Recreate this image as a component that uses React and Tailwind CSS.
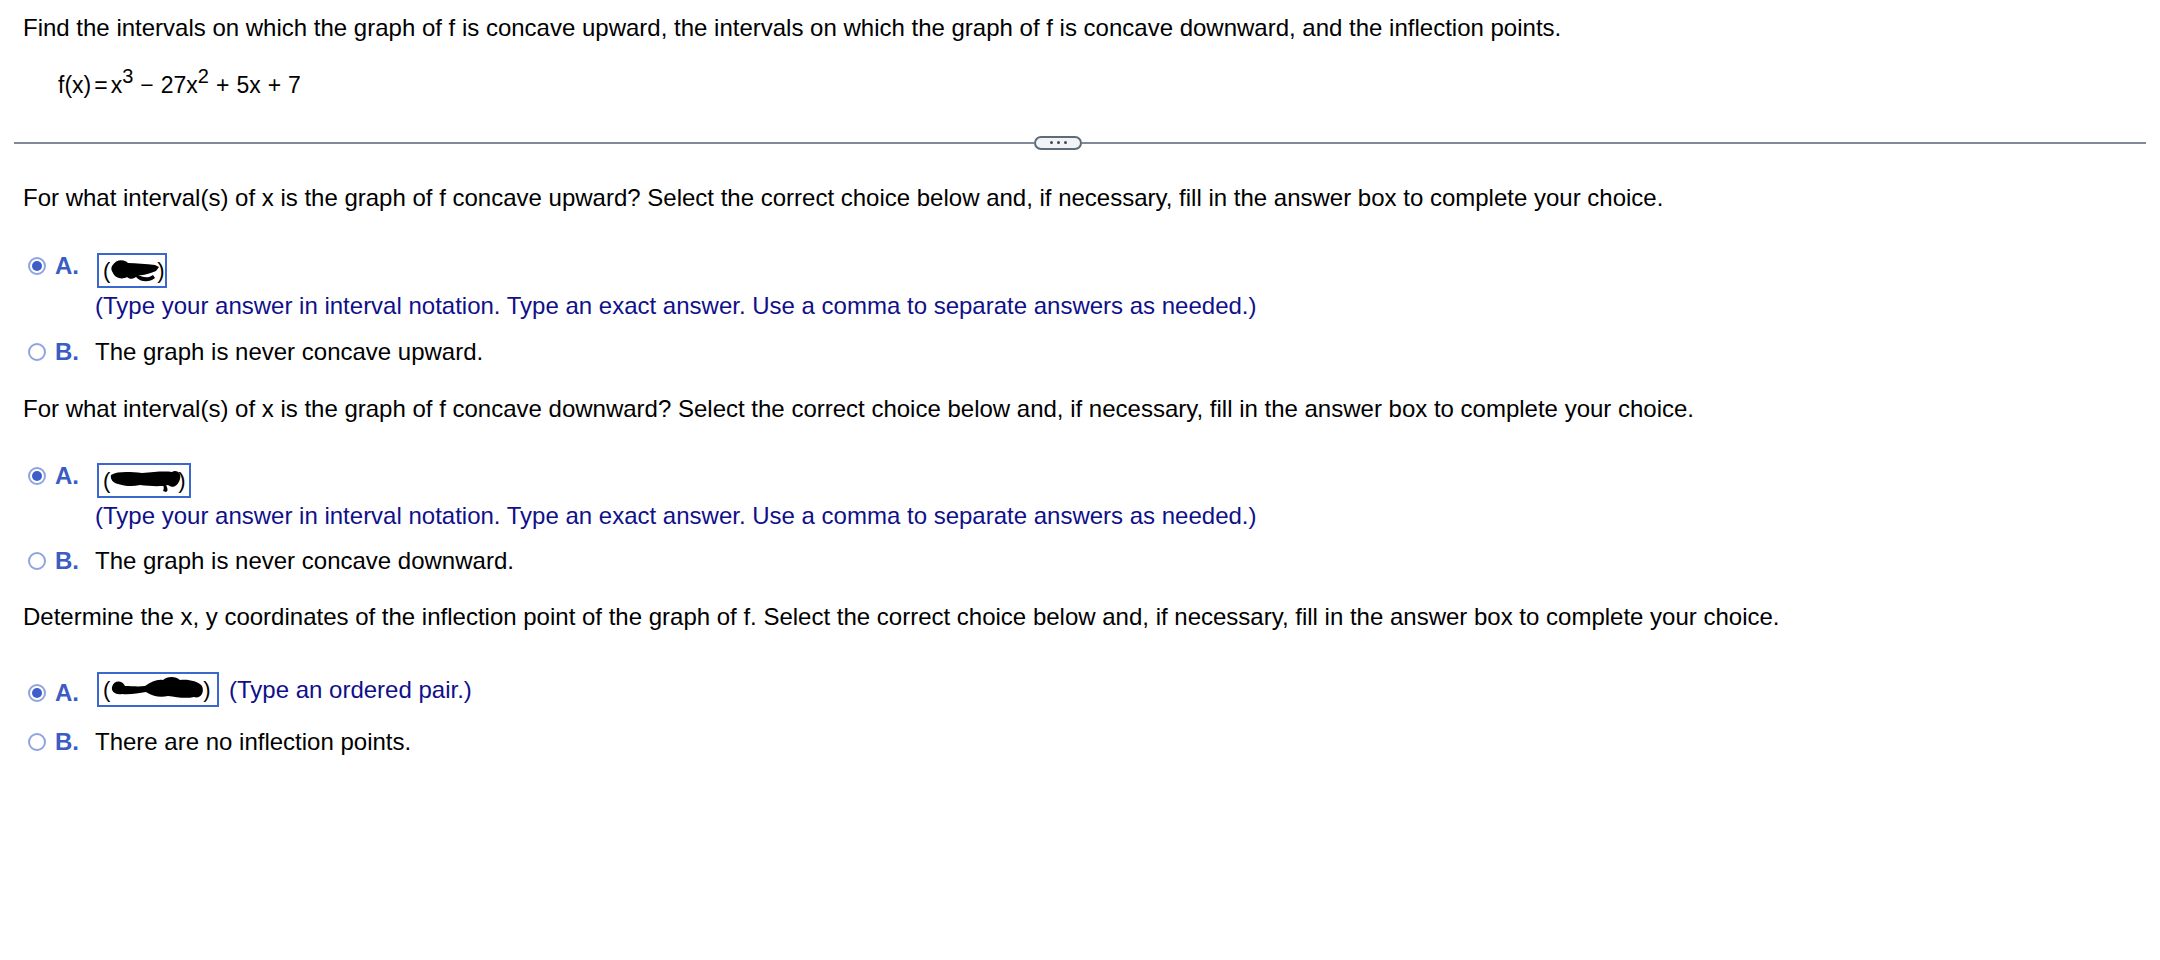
import React from "react";

const Radio = ({ checked }) => (
  <span className="flex h-[18px] w-[18px] shrink-0 items-center justify-center rounded-full border-[2px] border-[#8ea4e2] bg-white">
    {checked && <span className="h-[10px] w-[10px] rounded-full bg-[#3d5ec9]" />}
  </span>
);

const Blob = ({ w, d }) => (
  <svg width={w} height="28" viewBox={`0 0 ${w} 28`} className="shrink-0">
    <path d={d} fill="#000" />
  </svg>
);

const AnswerBox = ({ width, children }) => (
  <div
    className={`flex h-[35px] shrink-0 items-center border-[2px] border-[#3a68cc] px-[4px] ${width}`}
  >
    {children}
  </div>
);

const Question = ({ children, className }) => (
  <div className={`h-[28px] pl-[23px] leading-[28px] ${className}`}>{children}</div>
);

const Hint = ({ children, className }) => (
  <div className={`h-[28px] pl-[95px] leading-[28px] text-[#10108a] ${className}`}>
    {children}
  </div>
);

const OptionB = ({ children, className }) => (
  <div className={`flex h-[28px] items-center pl-[28px] leading-[28px] ${className}`}>
    <Radio />
    <span className="ml-[9px] w-[40px] shrink-0 font-bold text-[#3b5cc4]">B.</span>
    <span>{children}</span>
  </div>
);

export default function App() {
  return (
    <div className="h-[960px] w-[2160px] overflow-hidden bg-white font-['Liberation_Sans',Arial,sans-serif] text-[24px] text-black">
      <div className="mt-[14px] h-[28px] pl-[23px] leading-[28px]">
        Find the intervals on which the graph of f is concave upward, the intervals on which the graph of f is concave downward, and the inflection points.
      </div>

      <div className="mt-[29px] flex h-[28px] items-end pl-[58px] text-[23px] leading-[28px]">
        <span>f(x)</span>
        <span className="px-[3px]">=</span>
        <span>x</span>
        <span className="mb-[13px] text-[20px] leading-none">3</span>
        <span className="px-[7px]">−</span>
        <span>27x</span>
        <span className="mb-[13px] text-[20px] leading-none">2</span>
        <span className="px-[7px]">+</span>
        <span>5x</span>
        <span className="px-[7px]">+</span>
        <span>7</span>
      </div>

      <div className="mt-[37px] flex h-[13px] items-center">
        <div className="ml-[14px] h-[2px] w-[1020px] bg-[#7f8997]" />
        <button className="flex h-[14px] w-[48px] items-center justify-center gap-[4px] rounded-full border-[2px] border-[#5d6b7b] bg-[#f1f3f6]">
          <span className="h-[3px] w-[3px] rounded-full bg-[#3f4a58]" />
          <span className="h-[3px] w-[3px] rounded-full bg-[#3f4a58]" />
          <span className="h-[3px] w-[3px] rounded-full bg-[#3f4a58]" />
        </button>
        <div className="mr-[14px] h-[2px] flex-1 bg-[#7f8997]" />
      </div>

      <Question className="mt-[35px]">
        For what interval(s) of x is the graph of f concave upward? Select the correct choice below and, if necessary, fill in the answer box to complete your choice.
      </Question>

      <div className="mt-[41px] flex h-[35px] items-start pl-[28px]">
        <div className="flex h-[26px] items-center">
          <Radio checked />
          <span className="ml-[9px] w-[42px] shrink-0 font-bold text-[#3b5cc4]">A.</span>
        </div>
        <AnswerBox width="w-[70px]">
          <span className="text-[22px]">(</span>
          <Blob w={50} d="M2 9 C6 2 14 2 18 6 C26 6 36 7 45 8 L49 10 L46 14 C40 16 34 19 28 18 C25 22 20 23 17 20 C12 23 5 21 3 16 C1 13 1 11 2 9 Z M28 18 C32 20 38 22 43 18 L45 21 C39 26 30 25 26 20 Z" />
          <span className="-ml-[3px] text-[22px]">)</span>
        </AnswerBox>
      </div>

      <Hint className="mt-[4px]">
        (Type your answer in interval notation. Type an exact answer. Use a comma to separate answers as needed.)
      </Hint>

      <OptionB className="mt-[18px]">The graph is never concave upward.</OptionB>

      <Question className="mt-[29px]">
        For what interval(s) of x is the graph of f concave downward? Select the correct choice below and, if necessary, fill in the answer box to complete your choice.
      </Question>

      <div className="mt-[40px] flex h-[35px] items-start pl-[28px]">
        <div className="flex h-[26px] items-center">
          <Radio checked />
          <span className="ml-[9px] w-[42px] shrink-0 font-bold text-[#3b5cc4]">A.</span>
        </div>
        <AnswerBox width="w-[94px]">
          <span className="text-[22px]">(</span>
          <Blob w={72} d="M1 8 C8 4 20 5 32 6 C44 5 54 4 62 5 C66 2 72 6 70 12 C68 19 63 22 58 18 C50 20 40 19 30 18 C22 20 14 19 8 17 C3 16 0 12 1 8 Z M56 18 C58 22 58 24 56 25 L53 24 C54 22 54 20 53 18 Z" />
          <span className="-ml-[4px] text-[22px]">)</span>
        </AnswerBox>
      </div>

      <Hint className="mt-[4px]">
        (Type your answer in interval notation. Type an exact answer. Use a comma to separate answers as needed.)
      </Hint>

      <OptionB className="mt-[17px]">The graph is never concave downward.</OptionB>

      <Question className="mt-[28px]">
        Determine the x, y coordinates of the inflection point of the graph of f. Select the correct choice below and, if necessary, fill in the answer box to complete your choice.
      </Question>

      <div className="mt-[41px] flex h-[35px] items-center pl-[28px]">
        <div className="flex h-[35px] items-center pt-[7px]">
          <Radio checked />
          <span className="ml-[9px] w-[42px] shrink-0 font-bold text-[#3b5cc4]">A.</span>
        </div>
        <AnswerBox width="w-[122px]">
          <span className="text-[22px]">(</span>
          <Blob w={96} d="M2 11 C4 4 12 4 15 10 C21 10 28 11 35 10 C41 6 47 3 53 4 C57 0 66 0 70 4 C78 3 88 5 92 10 C95 17 90 23 84 21 C76 23 66 21 58 20 C50 22 42 20 36 16 C28 17 20 19 12 18 C6 19 1 16 2 11 Z" />
          <span className="-ml-[3px] text-[22px]">)</span>
        </AnswerBox>
        <span className="ml-[10px] text-[#10108a]">(Type an ordered pair.)</span>
      </div>

      <OptionB className="mt-[21px]">There are no inflection points.</OptionB>
    </div>
  );
}
